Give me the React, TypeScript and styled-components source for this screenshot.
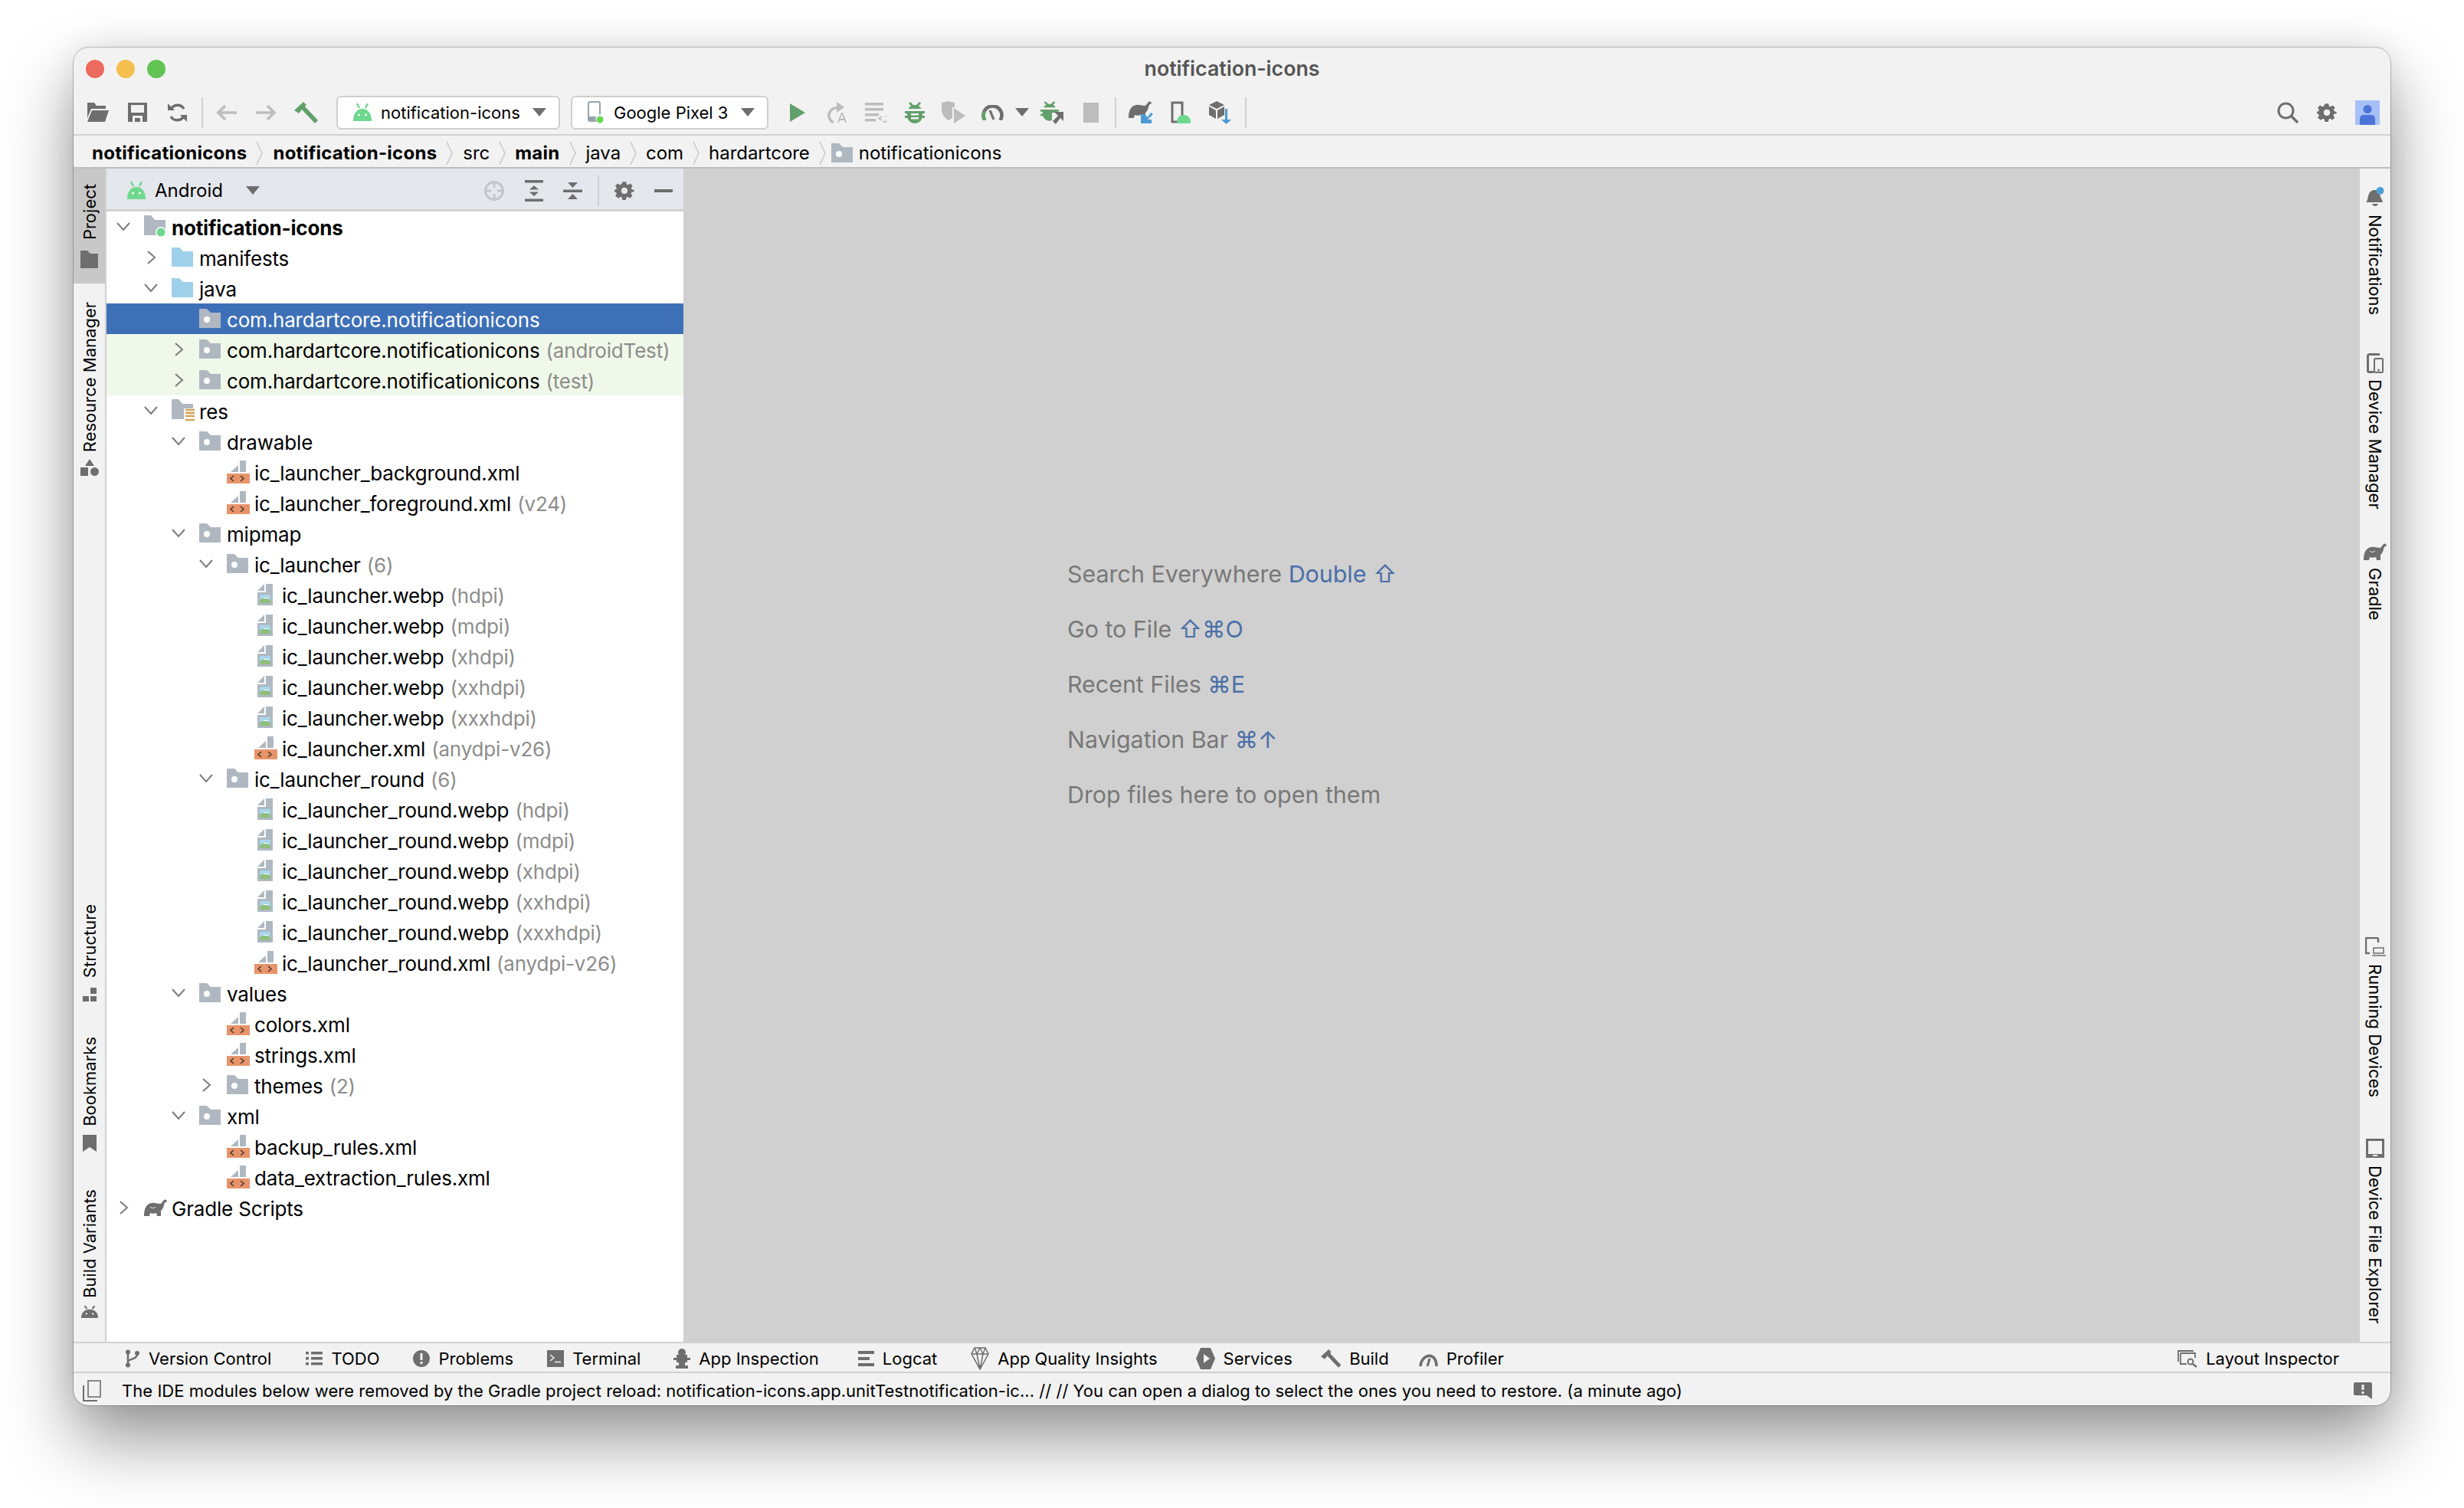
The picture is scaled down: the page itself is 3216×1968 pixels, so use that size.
import { FC, ReactNode } from 'react'
import styled, { createGlobalStyle } from 'styled-components'

const _gray = '#6e6e6e'
const _light = '#bdbdbd'
const _folder = '#afb8c1'
const _border = '#d1d1d1'
const _green = '#62a06b'
const _droid = '#6fd88f'
const _uiFont = `Inter, 'Noto Sans', 'Liberation Sans', sans-serif`

const GlobalStyle = createGlobalStyle`
  html, body {
    margin: 0;
    background: #fff;
    font-family: ${_uiFont};
    -webkit-font-smoothing: antialiased;
  }
  svg {
    display: block;
    flex: none;
  }
`

/* ---------- icons ---------- */

const elephantPath =
  'M0 22C0 12 3 6 10 5c4-1 8 1 11 1 2 0 3-3 5-5 2-1.500 4 0 4 2l-2 1c-2 1-2 5-3 7-1 2-2 3-3 4v7h-5l-1-4c-3 1-6 1-8 0l-1 4H2z'

const Folder: FC<{ dot?: boolean; color?: string }> = ({ dot = true, color = _folder }) => (
  <svg width="28" height="26" viewBox="0 0 28 26">
    <path d="M0 0h10l5 5h13v20H0z" fill={color} />
    {dot && <circle cx="10" cy="14" r="4" fill="#fff" />}
  </svg>
)

const ModuleFolder = () => (
  <svg width="28" height="30" viewBox="0 0 28 30">
    <path d="M0 0h9l5 6h14v20H0z" fill={_folder} />
    <circle cx="22" cy="22" r="7" fill="#fff" />
    <circle cx="22" cy="22" r="5.5" fill={_droid} />
  </svg>
)

const ResFolder = () => (
  <svg width="30" height="30" viewBox="0 0 30 30">
    <path d="M0 0h9l5 6h14v20H0z" fill={_folder} />
    <rect x="16" y="12" width="14" height="18" fill="#fff" />
    <path d="M18 14h12M18 18h12M18 22h12M18 27h12" stroke="#d2a55b" strokeWidth="2.4" />
  </svg>
)

const XmlFile = () => (
  <svg width="30" height="30" viewBox="0 0 30 30">
    <path d="M5 15 15 6v9zM17 0h8v15h-8z" fill={_folder} />
    <rect y="17" width="30" height="13" fill="#e8946a" />
    <path d="m9 20-4 3.5L9 27M18 20l4 3.5-4 3.5" fill="none" stroke="#4c3a30" strokeWidth="1.6" />
  </svg>
)

const WebpFile = () => (
  <svg width="20" height="28" viewBox="0 0 20 28">
    <path d="M0 9 9 0v9zM11 0h9v28H0V11h11z" fill={_folder} />
    <rect x="3" y="14" width="14" height="11" fill="#a9d6ea" />
    <path d="M3 25v-4c4-3 7-3 14 0v4z" fill="#8fbf7d" />
    <path d="M8 18h6v1H8z" fill="#fff" />
  </svg>
)

const Elephant: FC<{ color?: string }> = ({ color = _gray }) => (
  <svg width="30" height="22" viewBox="0 0 30 22">
    <path d={elephantPath} fill={color} />
    <path d="M8 10c2 2 5 2 7 0" fill="none" stroke="#fff" strokeWidth="1" />
  </svg>
)

const Droid: FC<{ w?: number; h?: number; color?: string }> = ({ w = 24, h = 23, color = _droid }) => (
  <svg width={w} height={h} viewBox="0 0 24 23" preserveAspectRatio="none">
    <path d="M5 0 8 6M19 0 16 6" stroke={color} strokeWidth="2.4" fill="none" />
    <path d="M0 23C0 13 5 7 12 7s12 6 12 16z" fill={color} />
    <circle cx="7.5" cy="15" r="1.4" fill="#fff" />
    <circle cx="16.5" cy="15" r="1.4" fill="#fff" />
  </svg>
)

const OpenFolderIcon = () => (
  <svg width="29" height="25" viewBox="0 0 29 25">
    <path d="M1 0h9l3 4h12v4H6L1 20zM7 10h22l-5 15H1z" fill={_gray} />
  </svg>
)

const SaveIcon = () => (
  <svg width="25" height="25" viewBox="0 0 25 25">
    <path
      fillRule="evenodd"
      d="M0 0h25v25H0zM4 3v10h17V3zM6 17v8h13v-8zM9 20h7v5H9z"
      fill={_gray}
    />
  </svg>
)

const SyncIcon = () => (
  <svg width="25" height="26" viewBox="0 0 25 26">
    <path d="M21 8a9.5 9.5 0 0 0-17 1M4 18a9.5 9.5 0 0 0 17-1" fill="none" stroke={_gray} strokeWidth="3.4" />
    <path d="M0 10h9L0 1zM25 16h-9l9 9z" fill={_gray} />
  </svg>
)

const ArrowIcon: FC<{ right?: boolean }> = ({ right }) => (
  <ArrowSvg $right={right} width="27" height="22" viewBox="0 0 27 22">
    <path d="M27 11H3M12 2l-9 9 9 9" fill="none" stroke={_light} strokeWidth="3.6" />
  </ArrowSvg>
)

const HammerIcon: FC<{ color?: string; scale?: number }> = ({ color = _green, scale = 1 }) => (
  <svg width={31 * scale} height={28 * scale} viewBox="0 0 31 28">
    <path d="M0 11 12 0l4 4-2 2 17 18-4 4L10 10l-4 5z" fill={color} />
  </svg>
)

const Caret: FC<{ color?: string }> = ({ color = _gray }) => (
  <svg width="18" height="11" viewBox="0 0 18 11">
    <path d="M0 0h18l-9 11z" fill={color} />
  </svg>
)

const PhoneIcon = () => (
  <svg width="22" height="30" viewBox="0 0 22 30">
    <rect x="1" y="1" width="15" height="25" rx="2" fill="#fff" stroke="#9aa4ad" strokeWidth="2" />
    <rect x="1" y="20" width="15" height="6" fill="#9aa4ad" />
    <circle cx="16" cy="23" r="5.5" fill="#fff" />
    <circle cx="16" cy="24" r="4.5" fill="#69d84f" />
  </svg>
)

const RunIcon = () => (
  <svg width="20" height="24" viewBox="0 0 20 24">
    <path d="M0 0 20 12 0 24z" fill="#62a06b" />
  </svg>
)

const RerunIcon = () => (
  <svg width="27" height="28" viewBox="0 0 27 28">
    <path d="M16 8A10 10 0 0 0 10 27" fill="none" stroke={_light} strokeWidth="3.6" />
    <path d="M14 0v14l10-7z" fill={_light} />
    <path d="M15 27l5-13h2l5 13h-2l-1-3h-6l-1 3zm3.800-5h4l-2-6z" fill={_light} />
  </svg>
)

const ApplyIcon = () => (
  <svg width="28" height="26" viewBox="0 0 28 26">
    <path d="M0 0h24v3.500H0zM0 7h24v3.500H0zM0 14h18v3.500H0zM0 21h14v3.500H0z" fill={_light} />
    <path d="M27 17a4.500 4.500 0 0 1-4 8M22 18l-4 2.500 4 2.500" fill="none" stroke={_light} strokeWidth="1.800" />
  </svg>
)

const BugIcon: FC<{ color?: string }> = ({ color = _green }) => (
  <svg width="26" height="28" viewBox="0 0 26 28">
    <path d="M7 0l4 4h4l4-4 2 2-3 3 3 3v1H5v-1l3-3-3-3z" fill={color} />
    <path d="M0 12h26v3h-3v3h3v3h-3.500A10 10 0 0 1 3.500 21H0v-3h3v-3H0z" fill={color} />
    <path d="M8 15h10v2.500H8zM8 20h10v2.500H8z" fill="#f2f2f2" />
  </svg>
)

const CoverageIcon = () => (
  <svg width="31" height="29" viewBox="0 0 31 29">
    <path d="M0 2 9 0l8 2v6l-3 0v14l-5 3C3 21 0 17 0 11z" fill={_light} />
    <path d="M16 9l15 10-15 10z" fill={_light} />
  </svg>
)

const ProfileIcon = () => (
  <svg width="29" height="20" viewBox="0 0 29 20">
    <path d="M4.500 20A12 12 0 1 1 24.500 20" fill="none" stroke={_gray} strokeWidth="4.600" />
    <path d="M4.500 20A12 12 0 0 1 4 8" fill="none" stroke="#62a06b" strokeWidth="4.600" />
    <path d="M11 7l5 12" stroke={_gray} strokeWidth="3.200" />
  </svg>
)

const AttachIcon = () => (
  <svg width="30" height="30" viewBox="0 0 30 30">
    <g transform="translate(0 0) scale(.92)">
      <path d="M7 0l4 4h4l4-4 2 2-3 3 3 3v1H5v-1l3-3-3-3z" fill={_green} />
      <path d="M0 12h26v3h-3v3h3v3h-3.500A10 10 0 0 1 3.500 21H0v-3h3v-3H0z" fill={_green} />
    </g>
    <path d="M15 15h15v15H15z" fill="#f2f2f2" />
    <path d="M18 14h12v12l-4-4-6 8-4-4 7-7z" fill={_gray} />
  </svg>
)

const StopIcon = () => (
  <svg width="20" height="26" viewBox="0 0 20 26">
    <rect width="20" height="26" fill={_light} />
  </svg>
)

const GradleSyncIcon = () => (
  <svg width="32" height="29" viewBox="0 0 32 29">
    <path d={elephantPath} fill={_gray} />
    <path d="M16 17h5l4 4 4-6 3 2-7 7h5v5H16z" fill="#4c9ad5" />
  </svg>
)

const DeviceManagerIcon = () => (
  <svg width="26" height="29" viewBox="0 0 26 29">
    <path d="M2 2h13v25H2z" fill="none" stroke={_gray} strokeWidth="3" />
    <path d="M8 29c0-8 4-11 9-11s9 3 9 11z" fill={_droid} />
  </svg>
)

const SdkIcon = () => (
  <svg width="30" height="30" viewBox="0 0 30 30">
    <path d="M10 0l10 5-10 5L0 5z" fill={_gray} />
    <path d="M0 7l9 5v11l-9-5zM20 7l-9 5v11l9-5z" fill={_gray} />
    <path d="M21 10h3v14h5l-6.500 6L16 24h5z" fill="#4c9ad5" />
  </svg>
)

const SearchIcon = () => (
  <svg width="28" height="28" viewBox="0 0 28 28">
    <circle cx="11.500" cy="11.500" r="9.500" fill="none" stroke={_gray} strokeWidth="3" />
    <path d="M18 18l9 9" stroke={_gray} strokeWidth="3.400" />
  </svg>
)

const GearIcon: FC<{ size?: number }> = ({ size = 26 }) => (
  <svg width={size} height={size} viewBox="0 0 26 26">
    <path
      fillRule="evenodd"
      d="M10.500 0h5l.6 3.600 2.300 1 3-2.100 3.500 3.500-2.100 3 1 2.300L27 12v2.500l-3.600.6-1 2.300 2.100 3-3.500 3.500-3-2.100-2.300 1-.6 3.700h-5l-.6-3.700-2.300-1-3 2.100L-.3 20.400l2.100-3-1-2.300L-3 14.500 -3 12l3.800-.7 1-2.300-2.100-3L3.200 2.500l3 2.100 2.300-1zM13 8.500a4.500 4.500 0 1 0 0 9 4.500 4.500 0 0 0 0-9z"
      transform="translate(1.300 1.200) scale(.9)"
      fill={_gray}
    />
  </svg>
)

const Avatar = () => (
  <svg width="32" height="32" viewBox="0 0 32 32">
    <rect width="32" height="32" fill="#a7c0f7" />
    <circle cx="16" cy="11.500" r="5.500" fill="#4c74d9" />
    <path d="M6 32V24c0-3 2-5 5-5h10c3 0 5 2 5 5v8z" fill="#4c74d9" />
  </svg>
)

const LocateIcon = () => (
  <svg width="28" height="28" viewBox="0 0 28 28">
    <circle cx="14" cy="14" r="11.500" fill="none" stroke="#c2c5c9" strokeWidth="3" />
    <path d="M14 2v8M14 18v8M2 14h8M18 14h8" stroke="#c2c5c9" strokeWidth="3" />
  </svg>
)

const ExpandIcon = () => (
  <svg width="24" height="28" viewBox="0 0 24 28">
    <path d="M0 0h24v3.500H0zM0 24.500h24V28H0zM12 7l6 5.500H6zM12 21l6-5.500H6z" fill={_gray} />
  </svg>
)

const CollapseIcon = () => (
  <svg width="25" height="26" viewBox="0 0 25 26">
    <path d="M0 11.500h25V15H0zM6 2h13l-6.500 7zM6 24h13l-6.500-7z" fill={_gray} />
  </svg>
)

const MinusIcon = () => (
  <svg width="24" height="4" viewBox="0 0 24 4">
    <rect width="24" height="4" fill={_gray} />
  </svg>
)

const TreeArrow: FC<{ open?: boolean }> = ({ open }) => (
  <svg width="18" height="18" viewBox="0 0 18 18">
    {open ? (
      <path d="M1 4l8 9 8-9" fill="none" stroke="#7c7c7c" strokeWidth="2" />
    ) : (
      <path d="M5 1l9 8-9 8" fill="none" stroke="#7c7c7c" strokeWidth="2" />
    )}
  </svg>
)

const PathChevron = () => (
  <svg width="9" height="30" viewBox="0 0 9 30">
    <path d="M1 0l7 15-7 15" fill="none" stroke="#c9c9c9" strokeWidth="1.500" />
  </svg>
)

/* stripe icons */
const StripeFolderIcon = () => (
  <svg width="23" height="23" viewBox="0 0 23 23">
    <path d="M0 0h9l4 4h10v19H0z" fill={_gray} />
  </svg>
)
const ResourceIcon = () => (
  <svg width="24" height="22" viewBox="0 0 24 22">
    <path d="M12 0l6 9H6zM0 11h10v11H0z" fill={_gray} />
    <ellipse cx="18.500" cy="16.500" rx="5.500" ry="5.500" fill={_gray} />
  </svg>
)
const StructureIcon = () => (
  <svg width="18" height="18" viewBox="0 0 18 18">
    <path d="M10 0h8v8h-8zM0 11h8v7H0zM10 11h8v7h-8z" fill={_gray} />
  </svg>
)
const BookmarkIcon = () => (
  <svg width="18" height="22" viewBox="0 0 18 22">
    <path d="M0 0h18v22l-9-6-9 6z" fill={_gray} />
  </svg>
)
const BellIcon = () => (
  <svg width="24" height="26" viewBox="0 0 24 26">
    <path d="M0 20c3-3 2-7 4-11 1-3 4-5 8-5s5 0 6 4l1 5c1 3 3 5 3 7z" fill={_gray} />
    <path d="M8 22h8c-1 4-7 4-8 0z" fill={_gray} />
    <circle cx="18.500" cy="5" r="5" fill="#4f9fd8" />
  </svg>
)
const TabletIcon = () => (
  <svg width="24" height="25" viewBox="0 0 24 25">
    <path fillRule="evenodd" d="M0 0h24v25H0zM3 3v17h18V3zM9 21v2h6v-2z" fill={_gray} />
  </svg>
)
const DeviceManagerStripeIcon = () => (
  <svg width="22" height="26" viewBox="0 0 22 26">
    <path d="M17 1.500H3.500a2 2 0 0 0-2 2V23a1.500 1.500 0 0 0 1.500 1.500h6" fill="none" stroke={_gray} strokeWidth="3" />
    <rect x="10" y="7" width="11" height="18" rx="1.500" fill="none" stroke={_gray} strokeWidth="2" />
    <circle cx="15.500" cy="22" r="1.500" fill={_gray} />
  </svg>
)
const RunningDevicesIcon = () => (
  <svg width="27" height="25" viewBox="0 0 27 25">
    <path d="M17 1H1v20h5" fill="none" stroke={_gray} strokeWidth="2.400" />
    <path d="M17 1v6" stroke={_gray} strokeWidth="2.400" />
    <rect x="11" y="14" width="13" height="7" fill="none" stroke={_gray} strokeWidth="1.500" />
    <path d="M9 24h18" stroke={_gray} strokeWidth="1.500" />
  </svg>
)

/* bottom bar icons */
const VcsIcon = () => (
  <svg width="20" height="24" viewBox="0 0 20 24">
    <circle cx="4" cy="3.500" r="3" fill={_gray} />
    <circle cx="4" cy="20.500" r="3" fill={_gray} />
    <circle cx="16" cy="5" r="3" fill={_gray} />
    <path d="M4 4v16M16 6c0 6-7 6-12 9" fill="none" stroke={_gray} strokeWidth="2.600" />
  </svg>
)
const TodoIcon = () => (
  <svg width="22" height="18" viewBox="0 0 22 18">
    <path d="M0 0h4v3.500H0zM7 0h15v3.500H7zM0 7h4v3.500H0zM7 7h15v3.500H7zM0 14h4v3.500H0zM7 14h15v3.500H7z" fill={_gray} />
  </svg>
)
const ProblemsIcon = () => (
  <svg width="22" height="22" viewBox="0 0 22 22">
    <circle cx="11" cy="11" r="11" fill={_gray} />
    <path d="M9.500 4h3v9h-3zM9.500 15h3v3h-3z" fill="#f2f2f2" />
  </svg>
)
const TerminalIcon = () => (
  <svg width="22" height="22" viewBox="0 0 22 22">
    <rect width="22" height="22" fill={_gray} />
    <path d="M4 6l5 4-5 4" fill="none" stroke="#f2f2f2" strokeWidth="1.500" />
    <path d="M10 15.500h8" stroke="#f2f2f2" strokeWidth="1.500" />
  </svg>
)
const InspectionIcon = () => (
  <svg width="22" height="26" viewBox="0 0 22 26">
    <circle cx="11" cy="5" r="5" fill={_gray} />
    <path d="M4 8h14v4h4v3h-4v3h-3v4h4v4H3v-4h4v-4H4v-3H0v-3h4z" fill={_gray} />
  </svg>
)
const LogcatIcon = () => (
  <svg width="21" height="20" viewBox="0 0 21 20">
    <path d="M0 0h21v4H0zM0 8h15v4H0zM0 16h21v4H0z" fill={_gray} />
  </svg>
)
const QualityIcon = () => (
  <svg width="24" height="30" viewBox="0 0 24 30">
    <path d="M5 1h14l4 8-11 20L1 9zM1 9h22M8 9l4 20 4-20M5 1l3 8 4-8 4 8 3-8" fill="none" stroke={_gray} strokeWidth="1.500" />
  </svg>
)
const ServicesIcon = () => (
  <svg width="25" height="28" viewBox="0 0 25 28">
    <path fillRule="evenodd" d="M6 0h13l6 14-6 14H6L0 14zM10 8v12l8-6z" fill={_gray} />
  </svg>
)
const ProfilerIcon = () => (
  <svg width="25" height="20" viewBox="0 0 25 20">
    <path d="M2 20C2 6 22 -2 23 20" fill="none" stroke={_gray} strokeWidth="3.600" />
    <path d="M11 20l3-10" stroke={_gray} strokeWidth="3" />
  </svg>
)
const LayoutInspectorIcon = () => (
  <svg width="26" height="23" viewBox="0 0 26 23">
    <path d="M21 1H1v14M4 4h19v6M4 4v14h8" fill="none" stroke={_gray} strokeWidth="1.800" />
    <circle cx="17" cy="15" r="3.500" fill="none" stroke={_gray} strokeWidth="2" />
    <path d="M20 18l5 4" stroke={_gray} strokeWidth="2.400" />
  </svg>
)
const CopyIcon = () => (
  <svg width="24" height="28" viewBox="0 0 24 28">
    <rect x="7" y="1" width="16" height="21" fill="none" stroke={_gray} strokeWidth="1.600" />
    <path d="M1 7v20h18" fill="none" stroke={_gray} strokeWidth="2" />
  </svg>
)
const FeedbackIcon = () => (
  <svg width="24" height="22" viewBox="0 0 24 22">
    <path d="M2 0h20a2 2 0 0 1 2 2v20l-7-5H2a2 2 0 0 1-2-2V2a2 2 0 0 1 2-2z" fill={_gray} />
    <path d="M10.500 3h3v7h-3zM10.500 12h3v3h-3z" fill="#f2f2f2" />
  </svg>
)

/* ---------- data ---------- */

type TreeItem = {
  depth: number
  name: string
  note?: string
  arrow?: 'open' | 'closed'
  icon: ReactNode
  bold?: boolean
  tone?: 'selected' | 'test'
}

const webp = (base: string, note: string, depth = 4): TreeItem => ({
  depth,
  name: `${base}.webp`,
  note,
  icon: <WebpFile />,
})
const xml = (name: string, note?: string, depth = 3): TreeItem => ({
  depth,
  name,
  note,
  icon: <XmlFile />,
})
const pkg = (depth: number, name: string, arrow?: 'open' | 'closed', note?: string): TreeItem => ({
  depth,
  name,
  arrow,
  note,
  icon: <Folder />,
})

const pkgName = 'com.hardartcore.notificationicons'

const tree: TreeItem[] = [
  { depth: 0, name: 'notification-icons', arrow: 'open', icon: <ModuleFolder />, bold: true },
  { depth: 1, name: 'manifests', arrow: 'closed', icon: <Folder dot={false} color="#9fd1ea" /> },
  { depth: 1, name: 'java', arrow: 'open', icon: <Folder dot={false} color="#9fd1ea" /> },
  { ...pkg(2, pkgName), tone: 'selected' },
  { ...pkg(2, pkgName, 'closed', '(androidTest)'), tone: 'test' },
  { ...pkg(2, pkgName, 'closed', '(test)'), tone: 'test' },
  { depth: 1, name: 'res', arrow: 'open', icon: <ResFolder /> },
  pkg(2, 'drawable', 'open'),
  xml('ic_launcher_background.xml'),
  xml('ic_launcher_foreground.xml', '(v24)'),
  pkg(2, 'mipmap', 'open'),
  pkg(3, 'ic_launcher', 'open', '(6)'),
  webp('ic_launcher', '(hdpi)'),
  webp('ic_launcher', '(mdpi)'),
  webp('ic_launcher', '(xhdpi)'),
  webp('ic_launcher', '(xxhdpi)'),
  webp('ic_launcher', '(xxxhdpi)'),
  xml('ic_launcher.xml', '(anydpi-v26)', 4),
  pkg(3, 'ic_launcher_round', 'open', '(6)'),
  webp('ic_launcher_round', '(hdpi)'),
  webp('ic_launcher_round', '(mdpi)'),
  webp('ic_launcher_round', '(xhdpi)'),
  webp('ic_launcher_round', '(xxhdpi)'),
  webp('ic_launcher_round', '(xxxhdpi)'),
  xml('ic_launcher_round.xml', '(anydpi-v26)', 4),
  pkg(2, 'values', 'open'),
  xml('colors.xml'),
  xml('strings.xml'),
  pkg(3, 'themes', 'closed', '(2)'),
  pkg(2, 'xml', 'open'),
  xml('backup_rules.xml'),
  xml('data_extraction_rules.xml'),
  { depth: 0, name: 'Gradle Scripts', arrow: 'closed', icon: <Elephant /> },
]

const crumbs = [
  { name: 'notificationicons', bold: true },
  { name: 'notification-icons', bold: true },
  { name: 'src' },
  { name: 'main', bold: true },
  { name: 'java' },
  { name: 'com' },
  { name: 'hardartcore' },
]

const bottomTools = [
  { name: 'Version Control', icon: <VcsIcon />, left: 0 },
  { name: 'TODO', icon: <TodoIcon />, left: 45 },
  { name: 'Problems', icon: <ProblemsIcon />, left: 44 },
  { name: 'Terminal', icon: <TerminalIcon />, left: 44 },
  { name: 'App Inspection', icon: <InspectionIcon />, left: 43 },
  { name: 'Logcat', icon: <LogcatIcon />, left: 51 },
  { name: 'App Quality Insights', icon: <QualityIcon />, left: 44 },
  { name: 'Services', icon: <ServicesIcon />, left: 50 },
  { name: 'Build', icon: <HammerIcon color={_gray} scale={0.85} />, left: 37 },
  { name: 'Profiler', icon: <ProfilerIcon />, left: 39 },
]

/* ---------- component ---------- */

export default function App() {
  return (
    <Page>
      <GlobalStyle />
      <Window>
        <TitleBar>
          <Lights>
            <Light $color="#ed6a5e" />
            <Light $color="#f4bf4f" />
            <Light $color="#61c454" />
          </Lights>
          <Title>notification-icons</Title>
        </TitleBar>
        <Toolbar>
          <Slot><OpenFolderIcon /></Slot>
          <Slot><SaveIcon /></Slot>
          <Slot><SyncIcon /></Slot>
          <Separator $after={4} />
          <Slot><ArrowIcon /></Slot>
          <Slot><ArrowIcon right /></Slot>
          <Slot><HammerIcon /></Slot>
          <Combo $width={292} $gap={14}>
            <Droid />
            <span>notification-icons</span>
            <Caret />
          </Combo>
          <Combo $width={258} $gap={14}>
            <PhoneIcon />
            <span>Google Pixel 3</span>
            <Caret />
          </Combo>
          <Slot $width={51} $left={12}><RunIcon /></Slot>
          <Slot $width={51}><RerunIcon /></Slot>
          <Slot $width={51}><ApplyIcon /></Slot>
          <Slot $width={51}><BugIcon /></Slot>
          <Slot $width={51}><CoverageIcon /></Slot>
          <Slot $width={51}><ProfileIcon /></Slot>
          <Slot $width={26}><Caret /></Slot>
          <Slot $width={51}><AttachIcon /></Slot>
          <Slot $width={51}><StopIcon /></Slot>
          <Separator />
          <Slot><GradleSyncIcon /></Slot>
          <Slot><DeviceManagerIcon /></Slot>
          <Slot><SdkIcon /></Slot>
          <Separator />
          <ToolbarRight>
            <SearchIcon />
            <GearIcon />
            <Avatar />
          </ToolbarRight>
        </Toolbar>
        <PathBar>
          {crumbs.map((c) => (
            <Crumb key={c.name + c.bold} $bold={c.bold}>
              {c.name}
              <PathChevron />
            </Crumb>
          ))}
          <Crumb $gap={8}>
            <Folder />
            notificationicons
          </Crumb>
        </PathBar>
        <Body>
          <LeftStripe>
            <StripeGroup>
              <StripeTab $active $pad="20px 0 20px" $gap={14}>
                <StripeLabel>Project</StripeLabel>
                <StripeFolderIcon />
              </StripeTab>
              <StripeTab $pad="24px 0 23px" $gap={9}>
                <StripeLabel>Resource Manager</StripeLabel>
                <ResourceIcon />
              </StripeTab>
            </StripeGroup>
            <StripeGroup>
              <StripeTab $pad="0 0 0" $gap={13}>
                <StripeLabel>Structure</StripeLabel>
                <StructureIcon />
              </StripeTab>
              <StripeTab $pad="46px 0 0" $gap={11}>
                <StripeLabel>Bookmarks</StripeLabel>
                <BookmarkIcon />
              </StripeTab>
              <StripeTab $pad="49px 0 31px" $gap={10}>
                <StripeLabel>Build Variants</StripeLabel>
                <Droid w={22} h={16} color={_gray} />
              </StripeTab>
            </StripeGroup>
          </LeftStripe>
          <ProjectPane>
            <PaneHeader>
              <Droid />
              <PaneTitle>Android</PaneTitle>
              <Caret />
              <PaneActions>
                <LocateIcon />
                <ExpandIcon />
                <CollapseIcon />
                <PaneSep />
                <GearIcon />
                <MinusIcon />
              </PaneActions>
            </PaneHeader>
            <Tree>
              {tree.map((item, i) => (
                <Row key={i} $depth={item.depth} $tone={item.tone}>
                  <ArrowSlot>{item.arrow && <TreeArrow open={item.arrow === 'open'} />}</ArrowSlot>
                  <IconSlot $small={item.name.endsWith('.webp')}>{item.icon}</IconSlot>
                  <RowName $bold={item.bold}>{item.name}</RowName>
                  {item.note && <RowNote>{item.note}</RowNote>}
                </Row>
              ))}
            </Tree>
          </ProjectPane>
          <Editor>
            <Hint>Search Everywhere <Key>Double ⇧</Key></Hint>
            <Hint>Go to File <Key>⇧⌘O</Key></Hint>
            <Hint>Recent Files <Key>⌘E</Key></Hint>
            <Hint>Navigation Bar <Key>⌘↑</Key></Hint>
            <Hint>Drop files here to open them</Hint>
          </Editor>
          <RightStripe>
            <StripeGroup>
              <RightTab $pad="24px 0 0" $gap={10}>
                <BellIcon />
                <RightLabel>Notifications</RightLabel>
              </RightTab>
              <RightTab $pad="50px 0 0" $gap={8}>
                <DeviceManagerStripeIcon />
                <RightLabel>Device Manager</RightLabel>
              </RightTab>
              <RightTab $pad="44px 0 0" $gap={10}>
                <Elephant />
                <RightLabel>Gradle</RightLabel>
              </RightTab>
            </StripeGroup>
            <StripeGroup>
              <RightTab $pad="0" $gap={10}>
                <RunningDevicesIcon />
                <RightLabel>Running Devices</RightLabel>
              </RightTab>
              <RightTab $pad="53px 0 24px" $gap={10}>
                <TabletIcon />
                <RightLabel>Device File Explorer</RightLabel>
              </RightTab>
            </StripeGroup>
          </RightStripe>
        </Body>
        <ToolBar>
          {bottomTools.map((t) => (
            <ToolItem key={t.name} $left={t.left}>
              {t.icon}
              {t.name}
            </ToolItem>
          ))}
          <ToolRight>
            <ToolItem $left={0}>
              <LayoutInspectorIcon />
              Layout Inspector
            </ToolItem>
          </ToolRight>
        </ToolBar>
        <StatusBar>
          <CopyIcon />
          <StatusText>
            The IDE modules below were removed by the Gradle project reload: notification-icons.app.unitTestnotification-ic... // // You can open a dialog to select the ones you need to restore. (a minute ago)
          </StatusText>
          <FeedbackIcon />
        </StatusBar>
      </Window>
    </Page>
  )
}

const Page = styled.div`
  box-sizing: border-box;
  width: 3216px;
  height: 1968px;
  padding: 62px 96px 134px;
  overflow: hidden;
  background: #fff;
`

const Window = styled.div`
  display: flex;
  flex-direction: column;
  height: 100%;
  border-radius: 20px;
  overflow: hidden;
  background: #f2f2f2;
  box-shadow: 0 0 0 1px rgba(0, 0, 0, 0.22), 0 44px 90px rgba(0, 0, 0, 0.42), 0 0 40px rgba(0, 0, 0, 0.08);
  color: #000;
`

const TitleBar = styled.div`
  position: relative;
  display: flex;
  align-items: center;
  justify-content: center;
  height: 56px;
  padding-bottom: 2px;
  box-sizing: border-box;
  flex: none;
`

const Lights = styled.div`
  position: absolute;
  left: 16px;
  top: 16px;
  display: flex;
  gap: 16px;
`

const Light = styled.i<{ $color: string }>`
  display: block;
  width: 24px;
  height: 24px;
  border-radius: 50%;
  background: ${(p) => p.$color};
`

const Title = styled.div`
  font-size: 26.7px;
  font-weight: 600;
  color: #555;
`

const Toolbar = styled.div`
  display: flex;
  align-items: center;
  flex: none;
  height: 57px;
  padding: 0 14px 0 5px;
  border-bottom: 2px solid ${_border};
`

const Slot = styled.div<{ $width?: number; $left?: number }>`
  display: flex;
  align-items: center;
  justify-content: center;
  flex: none;
  width: ${(p) => p.$width ?? 52}px;
  margin-left: ${(p) => p.$left ?? 0}px;
`

const ArrowSvg = styled.svg<{ $right?: boolean }>`
  transform: ${(p) => (p.$right ? 'scaleX(-1)' : 'none')};
`

const Separator = styled.div<{ $after?: number }>`
  flex: none;
  width: 2px;
  height: 40px;
  margin: 0 ${(p) => p.$after ?? 6}px 0 6px;
  background: ${_border};
`

const Combo = styled.div<{ $width: number; $gap: number }>`
  box-sizing: border-box;
  display: flex;
  align-items: center;
  gap: 12px;
  flex: none;
  width: ${(p) => p.$width}px;
  height: 44px;
  margin-left: ${(p) => p.$gap}px;
  padding: 0 16px 0 20px;
  border: 2px solid #cfcfcf;
  border-radius: 6px;
  background: #fff;
  font-size: 22px;
  span {
    flex: 1;
    white-space: nowrap;
  }
`

const ToolbarRight = styled.div`
  display: flex;
  align-items: center;
  gap: 24px;
  margin-left: auto;
`

const PathBar = styled.div`
  box-sizing: border-box;
  display: flex;
  align-items: center;
  flex: none;
  height: 43px;
  padding: 4px 0 0 24px;
  border-bottom: 2px solid #bdbdbd;
  font-size: 24px;
`

const Crumb = styled.div<{ $bold?: boolean; $gap?: number }>`
  display: flex;
  align-items: center;
  gap: ${(p) => p.$gap ?? 12}px;
  margin-right: ${(p) => (p.$bold ? 13 : 12)}px;
  font-weight: ${(p) => (p.$bold ? 700 : 400)};
  letter-spacing: ${(p) => (p.$bold ? '0.25px' : '-0.05px')};
  white-space: nowrap;
  &:nth-last-child(2) {
    margin-right: 7px;
  }
`

const Body = styled.div`
  display: flex;
  flex: 1;
  min-height: 0;
`

const LeftStripe = styled.div`
  display: flex;
  flex-direction: column;
  justify-content: space-between;
  flex: none;
  width: 41px;
  border-right: 2px solid ${_border};
`

const StripeGroup = styled.div`
  display: flex;
  flex-direction: column;
`

const StripeTab = styled.div<{ $active?: boolean; $pad: string; $gap: number }>`
  display: flex;
  flex-direction: column;
  align-items: center;
  gap: ${(p) => p.$gap}px;
  padding: ${(p) => p.$pad};
  background: ${(p) => (p.$active ? '#c8c8c8' : 'transparent')};
`

const StripeLabel = styled.span`
  writing-mode: vertical-rl;
  transform: rotate(180deg);
  font-size: 22px;
  white-space: nowrap;
`

const ProjectPane = styled.div`
  display: flex;
  flex-direction: column;
  flex: none;
  width: 753px;
  background: #fff;
`

const PaneHeader = styled.div`
  box-sizing: border-box;
  display: flex;
  align-items: center;
  flex: none;
  height: 56px;
  padding: 4px 14px 0 27px;
  background: #e4e7ec;
  border-bottom: 3px solid ${_border};
`

const PaneTitle = styled.span`
  margin: 0 30px 0 12px;
  font-size: 24px;
`

const PaneActions = styled.div`
  display: flex;
  align-items: center;
  gap: 26px;
  margin-left: auto;
`

const PaneSep = styled.div`
  width: 2px;
  height: 40px;
  margin: 0 -6px;
  background: ${_border};
`

const Tree = styled.div`
  flex: 1;
  overflow: hidden;
`

const Row = styled.div<{ $depth: number; $tone?: 'selected' | 'test' }>`
  box-sizing: border-box;
  display: flex;
  align-items: center;
  height: 40px;
  padding-left: ${(p) => 12 + p.$depth * 36}px;
  font-size: 26px;
  letter-spacing: -0.18px;
  color: ${(p) => (p.$tone === 'selected' ? '#fff' : '#000')};
  background: ${(p) =>
    p.$tone === 'selected' ? '#3e70b8' : p.$tone === 'test' ? '#f0f8e9' : 'transparent'};
  white-space: nowrap;
`

const ArrowSlot = styled.div`
  display: flex;
  justify-content: center;
  flex: none;
  width: 20px;
  margin-right: 17px;
`

const IconSlot = styled.div<{ $small?: boolean }>`
  display: flex;
  justify-content: ${(p) => (p.$small ? 'flex-end' : 'flex-start')};
  flex: none;
  width: 36px;
  padding-right: ${(p) => (p.$small ? 12 : 0)}px;
  box-sizing: border-box;
`

const RowName = styled.span<{ $bold?: boolean }>`
  margin-top: 2px;
  font-weight: ${(p) => (p.$bold ? 700 : 400)};
`

const RowNote = styled.span`
  margin: 2px 0 0 8px;
  color: #8c8c8c;
`

const Editor = styled.div`
  display: flex;
  flex-direction: column;
  flex: 1;
  gap: 33px;
  padding: 510px 0 0 501px;
  background: #d0d0d0;
`

const Hint = styled.div`
  font-size: 30.4px;
  line-height: 39px;
  color: #787878;
`

const Key = styled.span`
  color: #4a6fa8;
`

const RightStripe = styled.div`
  display: flex;
  flex-direction: column;
  justify-content: space-between;
  flex: none;
  width: 40px;
`

const RightTab = styled.div<{ $pad: string; $gap: number }>`
  display: flex;
  flex-direction: column;
  align-items: center;
  gap: ${(p) => p.$gap}px;
  padding: ${(p) => p.$pad};
`

const RightLabel = styled.span`
  writing-mode: vertical-rl;
  font-size: 22px;
  white-space: nowrap;
`

const ToolBar = styled.div`
  display: flex;
  align-items: center;
  flex: none;
  height: 41px;
  padding: 3px 67px 0;
  border-top: 2px solid ${_border};
  border-bottom: 2px solid ${_border};
  box-sizing: border-box;
  font-size: 22px;
`

const ToolItem = styled.div<{ $left: number }>`
  display: flex;
  align-items: center;
  gap: 11px;
  margin-left: ${(p) => p.$left}px;
  white-space: nowrap;
`

const ToolRight = styled.div`
  margin-left: auto;
`

const StatusBar = styled.div`
  box-sizing: border-box;
  display: flex;
  align-items: center;
  flex: none;
  height: 42px;
  padding: 3px 24px 0 12px;
  font-size: 22px;
`

const StatusText = styled.div`
  flex: 1;
  margin-left: 27px;
  letter-spacing: 0.04px;
  white-space: nowrap;
`
